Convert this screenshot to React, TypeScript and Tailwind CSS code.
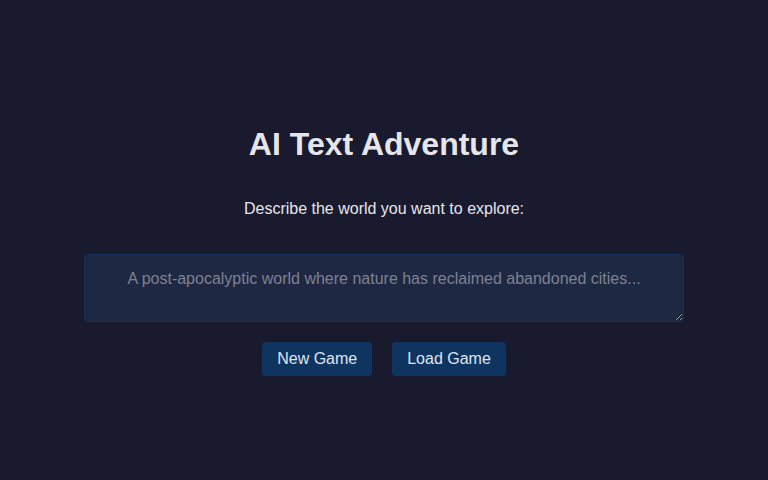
export default function App() {
  return (
    <div
      className="flex min-h-screen flex-col items-center justify-center bg-[#1a1a2e] pt-[22px] text-[#e6e6ea]"
      style={{ fontFamily: '"Liberation Sans", Arial, sans-serif' }}
    >
      <h1 className="text-[32px] font-bold leading-[37px]">AI Text Adventure</h1>

      <p className="mt-[37px] text-base leading-[18px]">
        Describe the world you want to explore:
      </p>

      <textarea
        className="mt-[36px] h-[68px] w-[600px] resize-y rounded border border-[#15305a] bg-[#1f2842] px-3 py-3 text-center text-base text-[#e6e6ea] placeholder:text-[#7d8190] focus:outline-none"
        placeholder="A post-apocalyptic world where nature has reclaimed abandoned cities..."
      />

      <div className="mt-5 flex gap-5">
        <button
          type="button"
          className="h-[34px] rounded bg-[#0f3460] px-[15px] text-base text-[#dfe6f2]"
        >
          New Game
        </button>
        <button
          type="button"
          className="h-[34px] rounded bg-[#0f3460] px-[15px] text-base text-[#dfe6f2]"
        >
          Load Game
        </button>
      </div>
    </div>
  );
}
